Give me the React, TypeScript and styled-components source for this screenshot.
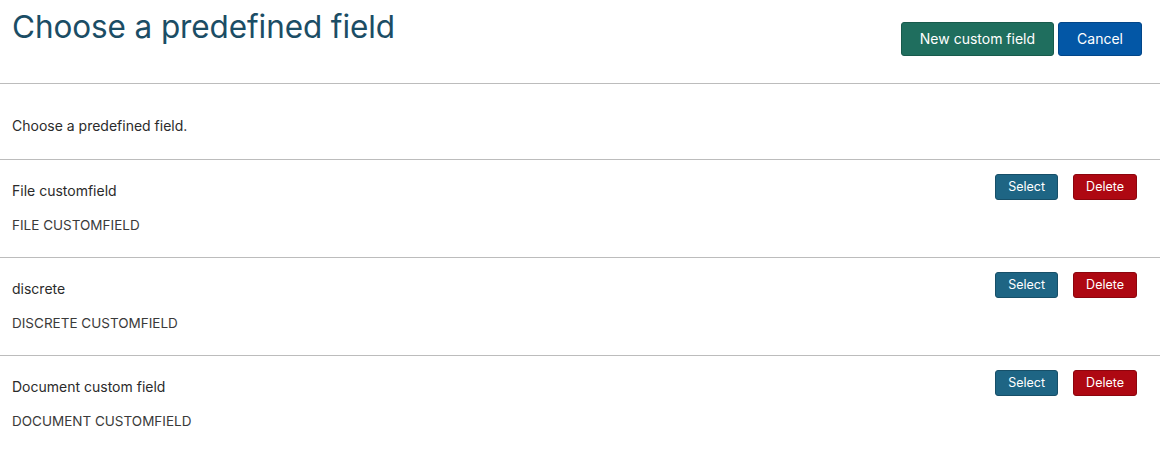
import React from 'react'
import styled, { createGlobalStyle } from 'styled-components'

const GlobalStyle = createGlobalStyle`
  html, body {
    margin: 0;
    padding: 0;
    background: #fff;
  }
  body {
    font-family: Inter, 'Noto Sans', sans-serif;
    color: #2b2b2b;
  }
`

const Page = styled.div`
  width: 1160px;
`

const Header = styled.header`
  height: 83px;
  display: flex;
  justify-content: space-between;
  align-items: flex-start;
  padding: 0 18px 0 12px;
  border-bottom: 1px solid #bcbcbc;
`

const Title = styled.h1`
  margin: 8px 0 0;
  font-size: 31.5px;
  line-height: 38px;
  font-weight: 400;
  color: #1b4d65;
  letter-spacing: -0.1px;
`

const Actions = styled.div`
  display: flex;
  gap: 4px;
  margin-top: 22px;
`

type Tone = 'green' | 'blue' | 'teal' | 'red'

const tones: Record<Tone, { bg: string; border: string }> = {
  green: { bg: '#1f6e5e', border: '#185a4c' },
  blue: { bg: '#0357a6', border: '#024689' },
  teal: { bg: '#1e6584', border: '#174f68' },
  red: { bg: '#ae0812', border: '#8c050d' },
}

const Button = styled.button<{ $tone: Tone; $small?: boolean }>`
  font-family: Inter, 'Noto Sans', sans-serif;
  color: #fff;
  background: ${(p) => tones[p.$tone].bg};
  border: 1px solid ${(p) => tones[p.$tone].border};
  border-radius: 3px;
  cursor: pointer;
  height: ${(p) => (p.$small ? '26px' : '34px')};
  padding: ${(p) => (p.$small ? '0 12px' : '0 18px')};
  font-size: ${(p) => (p.$small ? '12.5px' : '14px')};
  line-height: 1;
`

const Intro = styled.p`
  margin: 0;
  padding: 32px 12px 23px;
  font-size: 14px;
  line-height: 20px;
  border-bottom: 1px solid #bcbcbc;
`

const Row = styled.div`
  display: flex;
  justify-content: space-between;
  align-items: flex-start;
  padding: 21px 23px 22px 12px;
  border-bottom: 1px solid #bcbcbc;
  &:last-child {
    border-bottom: none;
  }
`

const Info = styled.div`
  display: flex;
  flex-direction: column;
  gap: 14px;
`

const Name = styled.div`
  font-size: 14px;
  line-height: 20px;
`

const Code = styled.div`
  font-size: 13.5px;
  line-height: 20px;
  color: #3a3a3a;
`

const RowActions = styled.div`
  display: flex;
  gap: 15px;
  margin-top: -7px;
`

const fields = [
  { name: 'File customfield', code: 'FILE CUSTOMFIELD' },
  { name: 'discrete', code: 'DISCRETE CUSTOMFIELD' },
  { name: 'Document custom field', code: 'DOCUMENT CUSTOMFIELD' },
]

export default function App() {
  return (
    <Page>
      <GlobalStyle />
      <Header>
        <Title>Choose a predefined field</Title>
        <Actions>
          <Button $tone='green'>New custom field</Button>
          <Button $tone='blue'>Cancel</Button>
        </Actions>
      </Header>
      <Intro>Choose a predefined field.</Intro>
      {fields.map((f) => (
        <Row key={f.code}>
          <Info>
            <Name>{f.name}</Name>
            <Code>{f.code}</Code>
          </Info>
          <RowActions>
            <Button $tone='teal' $small>
              Select
            </Button>
            <Button $tone='red' $small>
              Delete
            </Button>
          </RowActions>
        </Row>
      ))}
    </Page>
  )
}
